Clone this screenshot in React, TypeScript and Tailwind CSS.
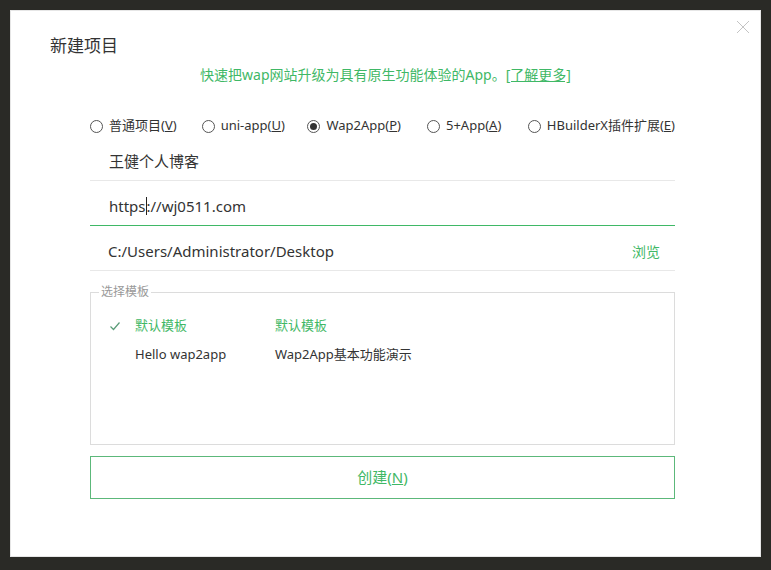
import React from 'react';

const font = { fontFamily: '"Noto Sans", "Noto Sans CJK SC", sans-serif' };

type RadioItem = { label: string; key: string; checked?: boolean; width: string };

const radios: RadioItem[] = [
  { label: '普通项目', key: 'V', width: 'w-[113px]' },
  { label: 'uni-app', key: 'U', width: 'w-[107px]' },
  { label: 'Wap2App', key: 'P', checked: true, width: 'w-[121px]' },
  { label: '5+App', key: 'A', width: 'w-[102px]' },
  { label: 'HBuilderX插件扩展', key: 'E', width: '' },
];

const Radio: React.FC<{ item: RadioItem }> = ({ item }) => (
  <div className={`flex items-center ${item.width}`}>
    <span className="w-[13px] h-[13px] rounded-full border border-[#555] flex items-center justify-center">
      {item.checked && <span className="w-[7px] h-[7px] rounded-full bg-[#333]" />}
    </span>
    <span className="ml-[6px] text-[13px] text-[#333] whitespace-nowrap">
      {item.label}(<span className="underline">{item.key}</span>)
    </span>
  </div>
);

export default function App() {
  return (
    <div className="w-[771px] h-[570px] bg-[#2a2a26] pt-[10px] pl-[10px]" style={font}>
      <div className="relative w-[751px] h-[547px] bg-white border border-[#e6e6e6]">
        <button className="absolute left-[724px] top-[8px] w-[16px] h-[16px]">
          <svg viewBox="0 0 16 16" width="16" height="16" fill="none" stroke="#c4c4c4" strokeWidth="1">
            <path d="M2 2 L14 14 M14 2 L2 14" />
          </svg>
        </button>

        <div className="mt-[23px] ml-[39px] h-[24px] leading-[24px] text-[17px] text-[#333]">新建项目</div>

        <div className="mt-[7px] h-[20px] leading-[20px] text-center text-[14px] text-[#3fb866]">
          快速把wap网站升级为具有原生功能体验的App。<span className="underline">[了解更多]</span>
        </div>

        <div className="ml-[79px] w-[585px]">
          <div className="mt-[31px] h-[20px] flex items-center">
            {radios.map((r) => (
              <Radio key={r.key} item={r} />
            ))}
          </div>

          <div className="h-[44px] pt-[6px] flex items-center pl-[19px] text-[15px] text-[#333]">
            王健个人博客
          </div>
          <div className="h-0 border-t border-[#e8e8e8]" />
          <div className="h-[44px] pt-[6px] flex items-center pl-[19px] text-[15px] text-[#333]">
            https<span className="inline-block w-px h-[18px] bg-[#222]" />://wj0511.com
          </div>
          <div className="h-0 border-t border-[#3fb866]" />
          <div className="h-[44px] pt-[6px] flex items-center justify-between pl-[18px] pr-[15px]">
            <span className="text-[15px] text-[#333]">C:/Users/Administrator/Desktop</span>
            <span className="text-[14px] text-[#3fb866]">浏览</span>
          </div>
          <div className="h-0 border-t border-[#e8e8e8]" />

          <div className="relative mt-[21px] h-[153px] border border-[#dcdcdc] pt-[18px]">
            <span className="absolute -top-[9px] left-[8px] bg-white px-[2px] text-[12px] leading-[16px] text-[#999]">
              选择模板
            </span>
            <div className="h-[29px] flex items-center text-[13px] text-[#3fb866]">
              <span className="w-[44px] pl-[18px]">
                <svg viewBox="0 0 12 12" width="12" height="12" fill="none" stroke="#5a9c78" strokeWidth="1.2">
                  <path d="M1.5 6.5 L4.5 9.5 L10.5 2.5" />
                </svg>
              </span>
              <span className="w-[140px]">默认模板</span>
              <span>默认模板</span>
            </div>
            <div className="h-[29px] flex items-center text-[13px] text-[#333]">
              <span className="w-[44px]" />
              <span className="w-[140px]">Hello wap2app</span>
              <span>Wap2App基本功能演示</span>
            </div>
          </div>

          <button className="mt-[11px] w-full h-[43px] border border-[#5cb87a] bg-white text-[15px] text-[#3fb866]">
            创建(<span className="underline">N</span>)
          </button>
        </div>
      </div>
    </div>
  );
}
